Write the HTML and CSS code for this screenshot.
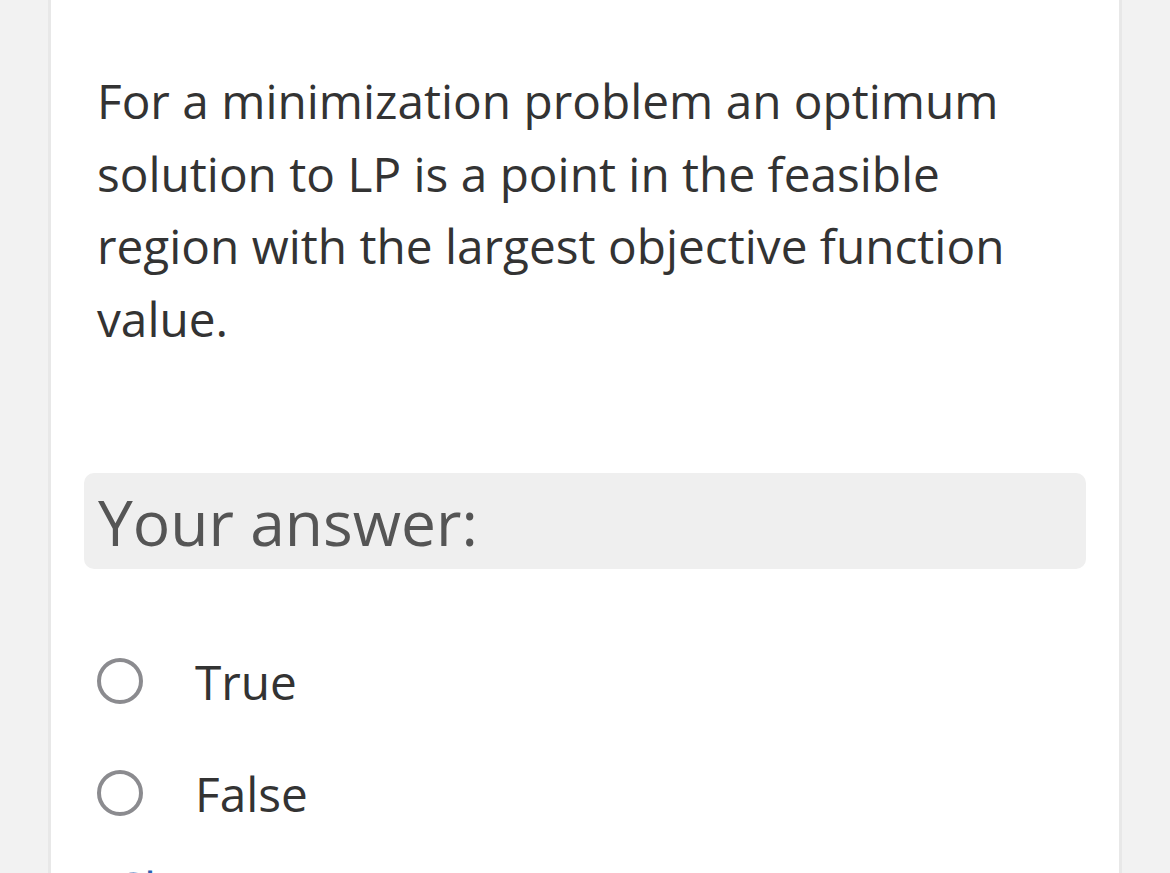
FILE: index.html
```html
<!DOCTYPE html>
<html lang="en">
<head>
<meta charset="utf-8">
<title>Question</title>
<link rel="stylesheet" href="styles.css">
</head>
<body>
<div class="card">
  <p class="question">For a minimization problem an optimum solution to LP is a point in the feasible region with the largest objective function value.</p>
  <div class="answer-box">Your answer:</div>
  <div class="options">
    <label class="option"><span class="radio"></span><span class="label">True</span></label>
    <label class="option"><span class="radio"></span><span class="label">False</span></label>
  </div>
  <a class="clear">Clear</a>
</div>
</body>
</html>
```
FILE: styles.css
```css
html, body {
  margin: 0;
  padding: 0;
  background: #f2f2f2;
  height: 873px;
  overflow: hidden;
}
body {
  font-family: "Open Sans", "Liberation Sans", sans-serif;
}
.card {
  margin: 0 48px;
  background: #ffffff;
  border-left: 3px solid #e8e8e8;
  border-right: 3px solid #e8e8e8;
  padding: 65px 33px 40px;
  min-height: 1000px;
  box-sizing: border-box;
}
.question {
  margin: 0;
  padding: 0 40px 0 13px;
  font-size: 47.75px;
  line-height: 72.5px;
  color: #333333;
}
.answer-box {
  margin-top: 118px;
  height: 96px;
  background: #efefef;
  border-radius: 10px;
  display: flex;
  align-items: center;
  padding-left: 14px;
  font-size: 62.3px;
  color: #555555;
}
.options {
  margin-top: 79px;
  display: flex;
  flex-direction: column;
  gap: 46px;
}
.option {
  display: flex;
  align-items: center;
  padding-left: 13px;
  height: 66px;
}
.radio {
  width: 46px;
  height: 46px;
  box-sizing: border-box;
  border: 4px solid #8b8b8f;
  border-radius: 50%;
  flex: none;
}
.label {
  margin-left: 52px;
  font-size: 47.75px;
  color: #333333;
}
.clear {
  display: block;
  margin-top: 30px;
  padding-left: 30px;
  font-size: 47.75px;
  color: #2a5db0;
}
```
